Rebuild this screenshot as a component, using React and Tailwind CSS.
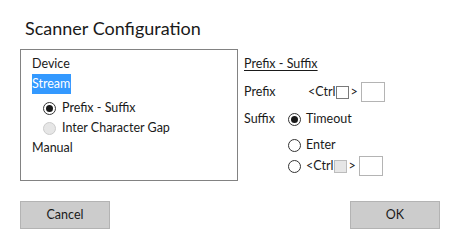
import React from 'react';

const Radio = ({ checked, disabled }) => (
  <span
    className={`flex h-[13px] w-[13px] shrink-0 items-center justify-center rounded-full border ${
      disabled ? 'border-[#cccccc] bg-[#e6e6e6]' : 'border-[#333333] bg-white'
    }`}
  >
    {checked && <span className="h-[7px] w-[7px] rounded-full bg-[#1a1a1a]" />}
  </span>
);

const CtrlKey = ({ disabled }) => (
  <div className="flex items-center">
    <span>&lt;Ctrl</span>
    <span
      className={`ml-[1px] h-[13px] w-[13px] border ${
        disabled ? 'border-[#bcbcbc] bg-[#e6e6e6]' : 'border-[#7a7a7a] bg-white'
      }`}
    />
    <span className="ml-[1px]">&gt;</span>
    <span className="ml-[3px] h-[20px] w-[24px] border border-[#b4b4b4] bg-white" />
  </div>
);

export default function App() {
  return (
    <div
      className="relative h-[249px] w-[460px] overflow-hidden bg-white text-[12.5px] text-[#1a1a1a]"
      style={{ fontFamily: 'Lato, "Noto Sans", sans-serif' }}
    >
      <div className="pl-[25px] pt-[16px] text-[18px] leading-[24px]">Scanner Configuration</div>

      <div className="mt-[9px] flex pl-[20px]">
        {/* tree list */}
        <div className="h-[132px] w-[218px] border border-[#828282] pl-[11px] pt-[4px]">
          <div className="flex h-[20px] items-center">Device</div>
          <div className="flex h-[20px] items-center">
            <span className="bg-[#3399ff] pr-[1px] leading-[20px] text-white">Stream</span>
          </div>
          <div className="mt-[4px] flex h-[20px] items-center pl-[11px]">
            <Radio checked />
            <span className="ml-[6px]">Prefix - Suffix</span>
          </div>
          <div className="flex h-[20px] items-center pl-[11px]">
            <Radio disabled />
            <span className="ml-[6px]">Inter Character Gap</span>
          </div>
          <div className="flex h-[20px] items-center">Manual</div>
        </div>

        {/* settings */}
        <div className="ml-[6px] flex flex-col pt-[5px]">
          <div className="flex h-[20px] items-center underline underline-offset-2">Prefix - Suffix</div>
          <div className="mt-[8px] flex h-[20px] items-center">
            <span className="w-[64px]">Prefix</span>
            <CtrlKey />
          </div>
          <div className="mt-[7px] flex h-[20px] items-center">
            <span className="w-[44px]">Suffix</span>
            <Radio checked />
            <span className="ml-[5px]">Timeout</span>
          </div>
          <div className="mt-[6px] flex h-[20px] items-center pl-[44px]">
            <Radio />
            <span className="ml-[5px]">Enter</span>
          </div>
          <div className="mt-[1px] flex h-[20px] items-center pl-[44px]">
            <Radio />
            <span className="ml-[5px]">
              <CtrlKey disabled />
            </span>
          </div>
        </div>
      </div>

      <div className="mt-[20px] flex justify-between px-[20px]">
        <button className="h-[28px] w-[90px] border border-[#b3b3b3] bg-[#cccccc]">Cancel</button>
        <button className="h-[28px] w-[90px] border border-[#b3b3b3] bg-[#cccccc]">OK</button>
      </div>
    </div>
  );
}
